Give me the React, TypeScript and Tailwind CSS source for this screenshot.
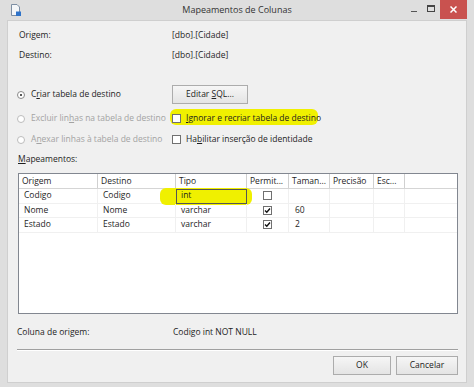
import React from "react";

const font = { fontFamily: '"Open Sans", "Noto Sans", sans-serif' };

function Radio({ checked, disabled }: { checked?: boolean; disabled?: boolean }) {
  return (
    <span
      className={`relative inline-block shrink-0 w-[8px] h-[8px] rounded-full border bg-white ${
        disabled ? "border-[#bcbcbc]" : "border-[#8a8a8a]"
      }`}
    >
      {checked && <span className="absolute left-[2px] top-[2px] w-[2px] h-[2px] rounded-full bg-[#222]" />}
    </span>
  );
}

function Check({ checked }: { checked?: boolean }) {
  return (
    <span className="relative inline-flex shrink-0 items-center justify-center w-[9px] h-[9px] border border-[#707070] bg-white">
      {checked && (
        <svg width="7" height="7" viewBox="0 0 7 7" className="absolute">
          <path d="M1 3.5 L2.8 5.3 L6 1.5" stroke="#111" strokeWidth="1.4" fill="none" />
        </svg>
      )}
    </span>
  );
}

function Btn({ children, w }: { children: React.ReactNode; w: string }) {
  return (
    <div
      className={`${w} h-[19px] flex items-center justify-center whitespace-nowrap bg-gradient-to-b from-[#f6f6f6] to-[#e4e4e4] border border-[#acacac] text-[8.5px] text-[#222]`}
    >
      <span>{children}</span>
    </div>
  );
}

const cols = [
  { name: "Origem", w: "w-[79px]" },
  { name: "Destino", w: "w-[78px]" },
  { name: "Tipo", w: "w-[71px]" },
  { name: "Permit...", w: "w-[42px]" },
  { name: "Taman...", w: "w-[41px]" },
  { name: "Precisão", w: "w-[44px]" },
  { name: "Esc...", w: "w-[31px]" },
];

const rows = [
  { o: "Codigo", d: "Codigo", t: "int", p: false, s: "" },
  { o: "Nome", d: "Nome", t: "varchar", p: true, s: "60" },
  { o: "Estado", d: "Estado", t: "varchar", p: true, s: "2" },
];

export default function App() {
  return (
    <div style={font} className="relative w-[474px] h-[387px] bg-[#dedede] overflow-hidden text-[#1e1e1e]">
      {/* title bar */}
      <div className="relative h-[20px] flex items-center">
        <svg width="10" height="12" viewBox="0 0 10 12" className="absolute left-[11px] top-[4px]">
          <path d="M0.5 0.5 H6 L8.5 3 V11.5 H0.5 Z" fill="#f4f6f8" stroke="#7d8ea3" />
          <rect x="5" y="7.5" width="5" height="4.5" fill="#2f73c9" />
        </svg>
        <div className="absolute left-0 right-0 text-center text-[9px] text-[#333] top-[3px]">Mapeamentos de Colunas</div>
        <div className="absolute left-[411px] top-[11px] w-[6px] h-[1px] bg-[#555]" />
        <div className="absolute left-[427px] top-[5px] w-[8px] h-[7px] border border-[#444] border-t-2" />
        <div className="absolute left-[440px] top-0 w-[27px] h-[19px] bg-[#c9524f] flex items-center justify-center">
          <svg width="7" height="7" viewBox="0 0 7 7">
            <path d="M0.5 0.5 L6.5 6.5 M6.5 0.5 L0.5 6.5" stroke="#fff" strokeWidth="1.5" />
          </svg>
        </div>
      </div>

      {/* client */}
      <div className="absolute left-[7px] top-[20px] w-[460px] h-[363px] bg-[#f0f0f0] border border-[#cfcfcf] text-[8.5px] whitespace-nowrap">
        <div className="flex flex-col pt-[5px]">
          <div className="h-[18px] flex items-center">
            <span className="w-[164px] pl-[11px]">Origem:</span>
            <span>[dbo].[Cidade]</span>
          </div>
          <div className="h-[18px] flex items-center mt-[2px]">
            <span className="w-[164px] pl-[11px]">Destino:</span>
            <span>[dbo].[Cidade]</span>
          </div>

          <div className="h-[19px] flex items-center mt-[21px]">
            <div className="w-[164px] pl-[9px] flex items-center gap-[6px]">
              <Radio checked />
              <span>
                C<u>r</u>iar tabela de destino
              </span>
            </div>
            <Btn w="w-[76px]">
              {"Editar "}
              <u>S</u>
              {"QL..."}
            </Btn>
          </div>

          <div className="h-[19px] flex items-center mt-[5px]">
            <div className="w-[164px] pl-[9px] flex items-center gap-[6px] text-[#a3a3a3]">
              <Radio disabled />
              <span>
                Excluir lin<u>h</u>as na tabela de destino
              </span>
            </div>
            <div className="relative flex items-center gap-[5px]">
              <div className="absolute left-[-2px] top-[-3px] w-[148px] h-[16px] rounded-[6px] bg-[#f0f000]" />
              <div className="relative flex items-center gap-[5px]">
                <Check />
                <span>
                  <u>I</u>gnorar e recriar tabela de destino
                </span>
              </div>
            </div>
          </div>

          <div className="h-[19px] flex items-center mt-[2px]">
            <div className="w-[164px] pl-[9px] flex items-center gap-[6px] text-[#a3a3a3]">
              <Radio disabled />
              <span>
                A<u>n</u>exar linhas à tabela de destino
              </span>
            </div>
            <div className="flex items-center gap-[5px]">
              <Check />
              <span>
                Ha<u>b</u>ilitar inserção de identidade
              </span>
            </div>
          </div>

          <div className="h-[14px] flex items-center mt-[3px] pl-[10px]">
            <span>
              <u>M</u>apeamentos:
            </span>
          </div>

          {/* grid */}
          <div className="relative mt-[7px] ml-[10px] w-[440px] h-[141px] bg-white border border-[#828790]">
            <div className="flex h-[15px] border-b border-[#d5d5d5]">
              {cols.map((c) => (
                <div
                  key={c.name}
                  className={`${c.w} h-full flex items-center pl-[3px] border-r border-[#d0d0d0] bg-white`}
                >
                  {c.name}
                </div>
              ))}
            </div>
            {rows.map((r, i) => (
              <div key={i} className="relative flex h-[14.5px] border-b border-[#f0f0f0]">
                <div className="w-[79px] flex items-center pl-[5px] border-r border-[#f0f0f0]">{r.o}</div>
                <div className="w-[78px] flex items-center pl-[5px] border-r border-[#f0f0f0]">{r.d}</div>
                <div className="relative w-[71px] flex items-center pl-[5px] border-r border-[#f0f0f0]">
                  {i === 0 && (
                    <>
                      <div className="absolute left-[-16px] top-[-1px] w-[92px] h-[17px] rounded-[6px] bg-[#f0f000]" />
                      <div className="absolute left-0 top-0 w-[71px] h-[15px] border border-[#555]" />
                    </>
                  )}
                  <span className="relative">{r.t}</span>
                </div>
                <div className="w-[42px] flex items-center justify-center border-r border-[#f0f0f0]">
                  <Check checked={r.p} />
                </div>
                <div className="w-[41px] flex items-center pl-[6px] border-r border-[#f0f0f0]">{r.s}</div>
                <div className="w-[44px] border-r border-[#f0f0f0]" />
                <div className="w-[31px] border-r border-[#f0f0f0]" />
              </div>
            ))}
          </div>

          <div className="h-[16px] flex items-center mt-[10px]">
            <span className="w-[165px] pl-[9px]">Coluna de origem:</span>
            <span>Codigo int NOT NULL</span>
          </div>

          <div className="mt-[9px] ml-[9px] w-[441px] h-[2px] border-t border-[#a0a0a0] border-b border-b-white" />

          <div className="flex justify-end gap-[5px] mt-[5px] pr-[8px]">
            <Btn w="w-[58px]">OK</Btn>
            <Btn w="w-[62px]">Cancelar</Btn>
          </div>
        </div>
      </div>
    </div>
  );
}
